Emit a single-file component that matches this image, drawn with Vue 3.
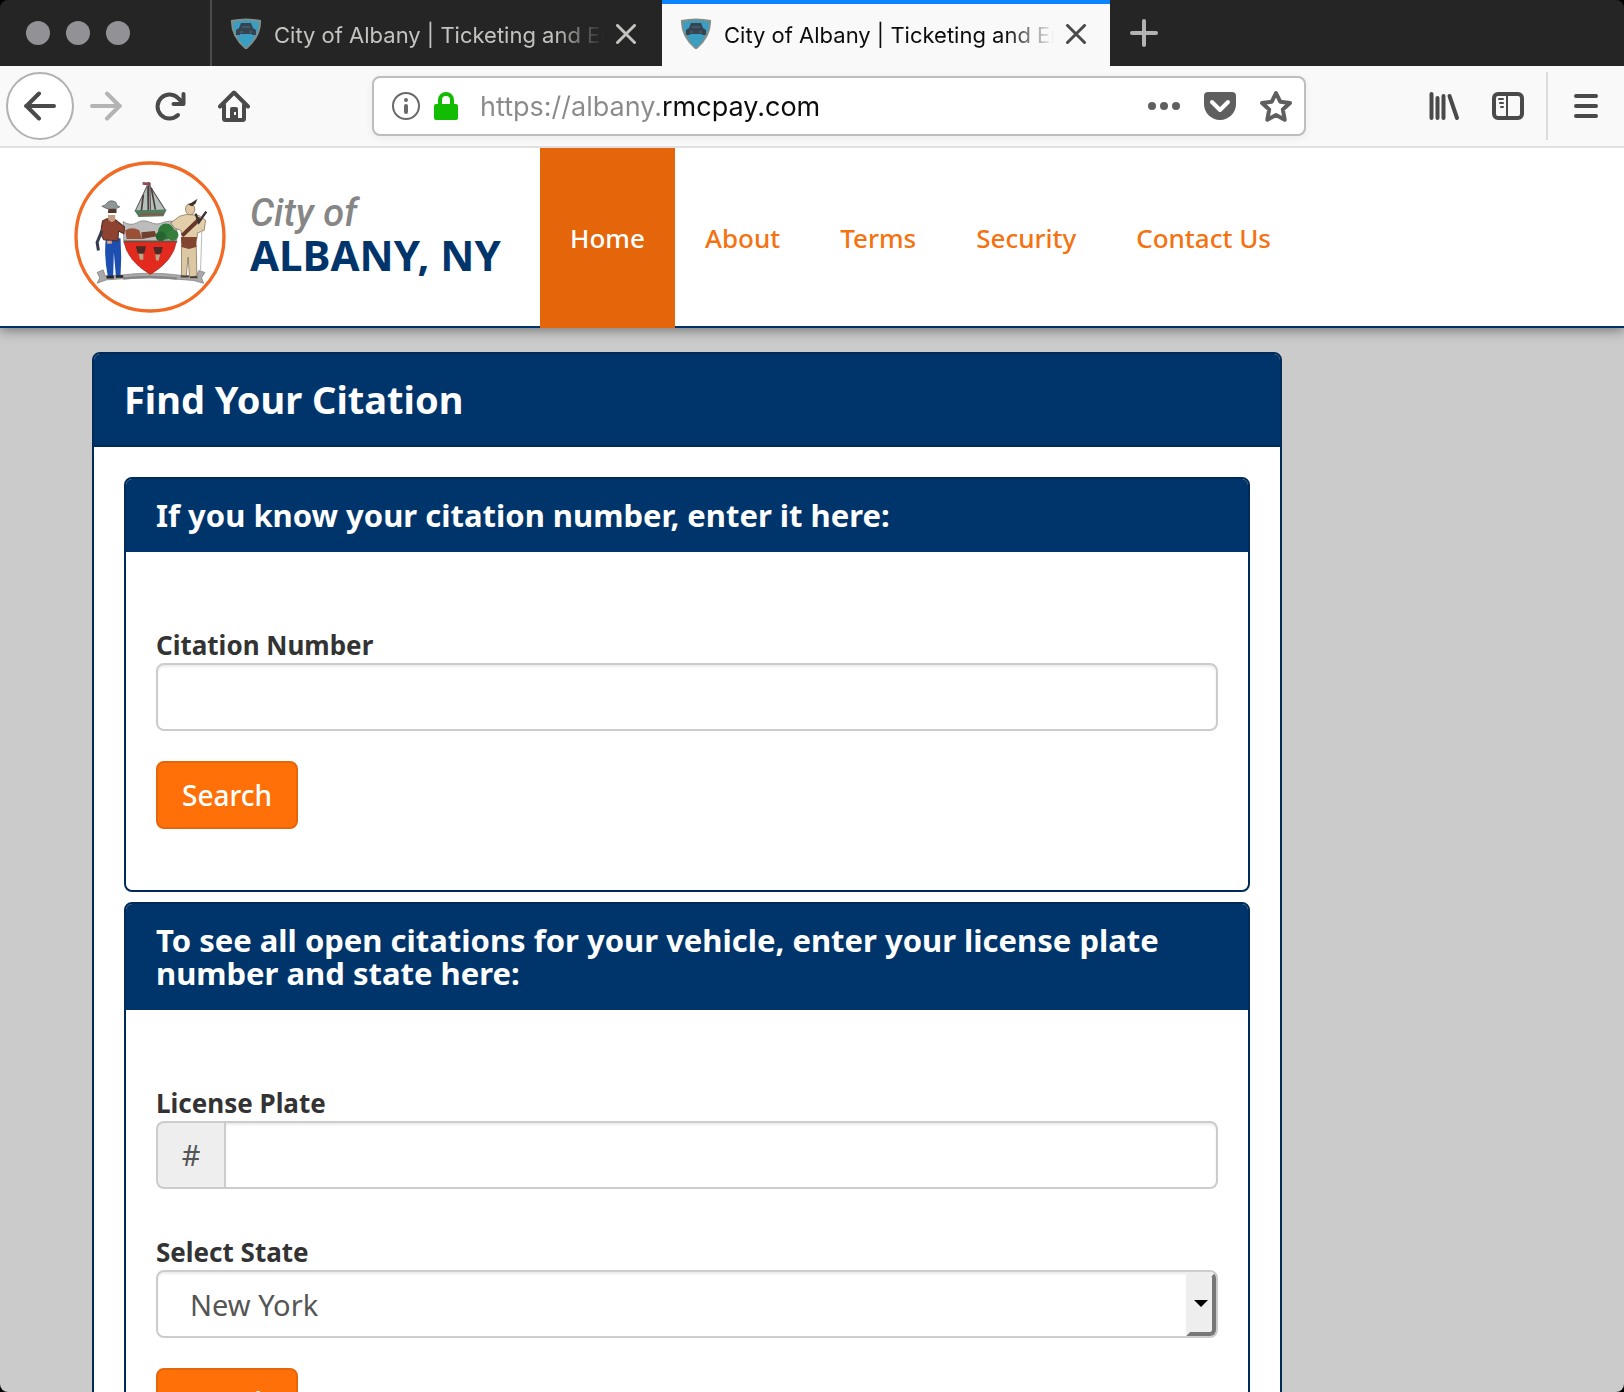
<template>
  <div class="window">
    <!-- Tab strip -->
    <div class="tab-strip">
      <div class="lights">
        <span class="light"></span>
        <span class="light"></span>
        <span class="light"></span>
      </div>
      <div
        v-for="tab in tabs"
        :key="tab.id"
        class="tab"
        :class="{ active: tab.id === activeTab }"
        @click="activeTab = tab.id"
      >
        <svg class="favicon" viewBox="0 0 32 32">
          <path d="M1 2 Q16 -1 31 2 Q32 18 17 31 L15 31 Q0 18 1 2z" fill="#7f8f8a" />
          <path d="M3 4 Q16 1 29 4 Q29 17 16 30 Q3 17 3 4z" fill="#3a9dc2" />
          <path d="M11 5h10l2 5 3 2v5h-4v-1H10v1H6v-5l3-2z" fill="#37444f" />
          <path d="M12 9h8M10 14h3M19 14h3" stroke="#4a6f85" stroke-width="1" />
        </svg>
        <span class="tab-title">{{ tab.title }}</span>
        <button class="tab-close" aria-label="Close tab">
          <svg width="20" height="20" viewBox="0 0 20 20">
            <path d="M1.5 1.5l17 17M18.5 1.5l-17 17" />
          </svg>
        </button>
      </div>
      <button class="new-tab" aria-label="New tab">
        <svg width="28" height="28" viewBox="0 0 28 28">
          <path d="M14 2v24M2 14h24" />
        </svg>
      </button>
    </div>

    <!-- Toolbar -->
    <div class="toolbar">
      <div class="nav-buttons">
        <button class="tool back" aria-label="Back">
          <svg width="32" height="32" viewBox="0 0 32 32">
            <path d="M2 16h28M15 3.5L2.5 16 15 28.5" />
          </svg>
        </button>
        <button class="tool forward" aria-label="Forward" disabled>
          <svg width="32" height="32" viewBox="0 0 32 32">
            <path d="M2 16h28M17 3.5L29.5 16 17 28.5" />
          </svg>
        </button>
        <button class="tool" aria-label="Reload">
          <svg width="32" height="32" viewBox="0 0 32 32">
            <path d="M24 25A12 12 0 1 1 24.5 8.5L28 12" />
            <path d="M29.5 4v10h-10" />
          </svg>
        </button>
        <button class="tool" aria-label="Home page">
          <svg width="32" height="32" viewBox="0 0 32 32">
            <path d="M2 16.5L16 2.5l14 14" />
            <path d="M6 15v13.5q0 1.500 1.500 1.500h17q1.500 0 1.500-1.500V15" />
            <path class="door" d="M12 30V19q0-2 2-2h4q2 0 2 2v11z" />
            <rect class="knob" x="16" y="22" width="2" height="3" />
          </svg>
        </button>
      </div>

      <div class="url-bar">
        <svg class="info" width="28" height="28" viewBox="0 0 28 28">
          <circle cx="14" cy="14" r="13" />
          <path d="M14 14v6" />
          <circle class="dot" cx="14" cy="8" r="2" />
        </svg>
        <svg class="lock" width="24" height="28" viewBox="0 0 24 28">
          <path d="M6 14V8a6 6 0 0 1 12 0v6" fill="none" stroke="#12bc00" stroke-width="4" />
          <rect y="12" width="24" height="16" rx="2" fill="#12bc00" />
        </svg>
        <input v-model="url" class="url" type="text" aria-label="Address" />
        <button class="page-action" aria-label="Page actions">
          <svg width="32" height="32" viewBox="0 0 32 32">
            <circle cx="4" cy="16" r="4" />
            <circle cx="16" cy="16" r="4" />
            <circle cx="28" cy="16" r="4" />
          </svg>
        </button>
        <button class="page-action" aria-label="Save to Pocket">
          <svg width="32" height="32" viewBox="0 0 32 32">
            <path d="M4 2h24q4 0 4 4v8a16 16 0 0 1-32 0V6q0-4 4-4z" />
            <path d="M8 12l8 8 8-8" fill="none" stroke="#fff" stroke-width="4" stroke-linecap="round" stroke-linejoin="round" />
          </svg>
        </button>
        <button class="page-action" aria-label="Bookmark this page">
          <svg width="32" height="32" viewBox="0 0 32 32">
            <path
              d="M16 3l4.200 8.700 9.800 1.300-7.200 6.500 1.900 10.200L16 25l-8.700 4.700 1.900-10.200L2 13l9.800-1.300z"
              fill="none" stroke="#5f5f60" stroke-width="4" stroke-linejoin="round"
            />
          </svg>
        </button>
      </div>

      <div class="end-buttons">
        <button class="tool" aria-label="Library">
          <svg width="32" height="32" viewBox="0 0 32 32">
            <path d="M3.500 4v24M9.500 8v20M15.500 6v22M21.500 6l7.500 22" />
          </svg>
        </button>
        <button class="tool" aria-label="Sidebar">
          <svg width="32" height="32" viewBox="0 0 32 32">
            <rect x="2" y="4" width="28" height="24" rx="4" />
            <path class="thin" d="M15 4v24M7 9h4M8 13h3M9 17h2" />
          </svg>
        </button>
        <button class="tool menu" aria-label="Menu">
          <svg width="24" height="24" viewBox="0 0 24 24">
            <path d="M2 2h20M2 12h20M2 22h20" />
          </svg>
        </button>
      </div>
    </div>

    <!-- Web page -->
    <div class="page">
      <header class="site-header">
        <a class="brand" href="#">
          <svg class="seal" width="152" height="152" viewBox="43 49 454 454">
            <circle cx="270" cy="276" r="221" fill="#fff" stroke="#f26a24" stroke-width="10" />
            <!-- ribbon -->
            <path d="M112 382l18-8 6 18 46-2q88-12 176 0l50 4 8-18 18 6-10 16 6 16-30-8q-130-14-260-2l-28 10 8-16z" fill="#a9a9a9" stroke="#777" stroke-width="2" />
            <path d="M190 400q80-10 160 0" fill="none" stroke="#858585" stroke-width="7" />
            <!-- ship -->
            <path d="M262 122l-36 76h38zM270 124l46 72-44 6z" fill="#b4c0b9" stroke="#555" stroke-width="3" />
            <path d="M266 112v90M274 130l12 64M250 150l-6 50" stroke="#4b3a3a" stroke-width="5" fill="none" />
            <path d="M248 112l24 2v9l-24-3z" fill="#8d4a52" />
            <path d="M224 197l96-3-10 20-74 2z" fill="#4f7d60" />
            <path d="M240 208h68" stroke="#a24940" stroke-width="5" />
            <!-- shield -->
            <path d="M190 230q20 14 40 4 18-12 40-2 22 10 40 0 20-6 40-2v62H192z" fill="#bcbcbc" stroke="#777" stroke-width="2" />
            <path d="M192 290h157q-10 58-78 98-68-40-79-98z" fill="#e32a1e" stroke="#9c2b24" stroke-width="2" />
            <path d="M196 256q20-12 42 0l8 26h-46z" fill="#9a4f37" />
            <path d="M244 262l40-4 6 16-44 8z" fill="#70402c" />
            <circle cx="318" cy="260" r="24" fill="#2e7937" />
            <circle cx="338" cy="270" r="17" fill="#377d3c" />
            <circle cx="302" cy="274" r="15" fill="#26652f" />
            <path d="M192 289h157" stroke="#6d5140" stroke-width="5" />
            <path d="M228 304h30l-4 18-10 8-12-8zM280 306h28l-4 18-12 6-8-8z" fill="#4a2926" />
            <path d="M236 326h14v18h-10zM286 328h14l-4 18h-8z" fill="#b8a688" />
            <!-- settler -->
            <path d="M138 280h44l2 58-2 54h-14l-6-70-2 72h-16q-12-60-6-114z" fill="#1c4fb0" />
            <path d="M128 228q26-18 48 4l18 14-2 20-16-8-2 30-42-4-10-18z" fill="#8d4330" stroke="#4c2b22" stroke-width="3" />
            <path d="M144 210h22v16l-10 6-10-6z" fill="#c49a80" />
            <path d="M126 184q10-2 14-8 10-14 28-4l4 10 8 4q-26 16-54-2z" fill="#8e9698" stroke="#555" stroke-width="2" />
            <path d="M146 192h24v12h-26z" fill="#54352c" />
            <path d="M126 258l-14 34 4 24" fill="none" stroke="#333c50" stroke-width="9" />
            <path d="M142 292h14" stroke="#d7a58c" stroke-width="9" />
            <path d="M140 396h22M168 394h22" stroke="#252525" stroke-width="8" />
            <!-- native figure -->
            <path d="M364 302l44-2 2 92-22 4-4-60-6 58-14-4z" fill="#dcc9a3" stroke="#75634d" stroke-width="2" />
            <path d="M332 234l26-20 24-6 34 4 20 14-4 30-20 8-2 18h-42l-6-26-18-6z" fill="#e2cfa9" stroke="#75634d" stroke-width="2" />
            <ellipse cx="390" cy="193" rx="14" ry="17" fill="#dfc6a0" stroke="#75634d" stroke-width="2" />
            <path d="M384 180l12-8 16-10-6 14-10 8z" fill="#3d332d" />
            <path d="M366 272l54-52" stroke="#65382a" stroke-width="12" />
            <path d="M406 206l10 26 22-32" fill="none" stroke="#383030" stroke-width="7" />
            <path d="M362 276h48l-2 30-22 6-22-6z" fill="#82452f" />
            <path d="M425 250l-4 126" stroke="#b8bcb5" stroke-width="3" />
            <path d="M362 394h24M390 396h22" stroke="#4b4035" stroke-width="6" />
          </svg>
          <span class="wordmark">
            <span class="city">City of</span>
            <span class="name">ALBANY, NY</span>
          </span>
        </a>
        <nav class="site-nav">
          <a
            v-for="item in navItems"
            :key="item"
            href="#"
            :class="{ current: item === 'Home' }"
          >{{ item }}</a>
        </nav>
      </header>

      <main class="panel">
        <h1 class="panel-heading">Find Your Citation</h1>
        <div class="panel-body">
          <form class="card" @submit.prevent>
            <h2 class="card-heading">If you know your citation number, enter it here:</h2>
            <div class="card-body">
              <label for="citation">Citation Number</label>
              <input id="citation" v-model="citation" class="control" type="text" />
              <button class="btn" type="submit">Search</button>
            </div>
          </form>

          <form class="card" @submit.prevent>
            <h2 class="card-heading">To see all open citations for your vehicle, enter your license plate number and state here:</h2>
            <div class="card-body">
              <label for="plate">License Plate</label>
              <div class="input-group">
                <span class="addon">#</span>
                <input id="plate" v-model="plate" class="control" type="text" />
              </div>
              <label class="state-label" for="state">Select State</label>
              <div class="select-wrap">
                <select id="state" v-model="state" class="control">
                  <option>New York</option>
                  <option>New Jersey</option>
                  <option>Vermont</option>
                </select>
                <span class="arrow"></span>
              </div>
              <button class="btn" type="submit">Search</button>
            </div>
          </form>
        </div>
      </main>
    </div>
  </div>
</template>

<script setup>
import { ref } from 'vue'

const tabs = [
  { id: 1, title: 'City of Albany | Ticketing and Enforcement' },
  { id: 2, title: 'City of Albany | Ticketing and Enforcement' }
]
const activeTab = ref(2)
const url = ref('https://albany.rmcpay.com')

const navItems = ['Home', 'About', 'Terms', 'Security', 'Contact Us']

const citation = ref('')
const plate = ref('')
const state = ref('New York')
</script>

<style>
body {
  background: #000;
}
</style>

<style scoped>
* {
  box-sizing: border-box;
}

.window {
  display: flex;
  flex-direction: column;
  height: 100vh;
  overflow: hidden;
  border-radius: 8px;
  font-family: "Noto Sans", "Open Sans", sans-serif;
}

button {
  padding: 0;
  border: none;
  background: none;
  font-family: inherit;
  color: inherit;
}

svg {
  display: block;
  flex: none;
}

/* tabs */
.tab-strip {
  display: flex;
  flex: none;
  height: 66px;
  background: #252525;
  font-family: Inter, Roboto, sans-serif;
}

.lights {
  display: flex;
  align-items: center;
  gap: 16px;
  width: 210px;
  padding-left: 26px;
}

.light {
  width: 24px;
  height: 24px;
  border-radius: 50%;
  background: #929195;
}

.tab {
  box-sizing: content-box;
  display: flex;
  align-items: center;
  width: 448px;
  border-left: 2px solid #4c4c4c;
  border-right: 2px solid #252525;
  color: #c3c3c0;
}

.tab.active {
  border: none;
  background: #f9f9fa;
  box-shadow: inset 0 4px #0a84ff;
  color: #0c0c0d;
}

.favicon {
  width: 32px;
  height: 32px;
  margin: 2px 12px 0 18px;
}

.tab-title {
  flex: 1;
  overflow: hidden;
  white-space: nowrap;
  font-size: 22px;
  line-height: 30px;
  padding-top: 4px;
  -webkit-mask-image: linear-gradient(to left, transparent, #000 48px);
  mask-image: linear-gradient(to left, transparent, #000 48px);
}

.tab-close {
  margin: 2px 24px 0 12px;
}

.tab-close path {
  fill: none;
  stroke: currentColor;
  stroke-width: 3;
  stroke-linecap: round;
}

.tab.active .tab-close {
  color: #4a4a4b;
}

.new-tab {
  margin-left: 20px;
}

.new-tab path {
  stroke: #b3b3b3;
  stroke-width: 4;
  stroke-linecap: round;
}

/* toolbar */
.toolbar {
  display: flex;
  flex: none;
  align-items: center;
  height: 82px;
  padding-left: 6px;
  border-bottom: 2px solid #e0e0e1;
  background: #f9f9fa;
}

.nav-buttons {
  display: flex;
  align-items: center;
  width: 366px;
}

.tool {
  width: 32px;
  margin-right: 32px;
}

.tool path,
.tool rect {
  fill: none;
  stroke: #4a4a4b;
  stroke-width: 4;
  stroke-linecap: round;
  stroke-linejoin: round;
}

.tool .door {
  fill: #4a4a4b;
  stroke: none;
}

.tool .knob {
  fill: #f9f9fa;
  stroke: none;
}

.tool .thin {
  stroke-width: 2;
}

.tool.back {
  display: flex;
  align-items: center;
  justify-content: center;
  width: 68px;
  height: 68px;
  margin-right: 16px;
  border: 2px solid #b1b1b2;
  border-radius: 50%;
  background: #fff;
}

.tool.forward path {
  stroke: #b4b4b5;
}

.url-bar {
  display: flex;
  flex: 1;
  align-items: center;
  height: 60px;
  padding: 0 12px 0 18px;
  border: 2px solid #bdbdbd;
  border-radius: 8px;
  background: #fff;
  box-shadow: 0 2px 8px rgba(0, 0, 0, 0.06);
}

.info {
  margin-right: 14px;
}

.info circle,
.info path {
  fill: none;
  stroke: #6a6a6b;
  stroke-width: 2;
}

.info path {
  stroke-width: 4;
  stroke-linecap: round;
}

.info .dot {
  fill: #6a6a6b;
  stroke: none;
}

/* the host part is darker than the scheme and subdomain */
.url {
  flex: 1;
  min-width: 0;
  margin-left: 22px;
  padding: 2px 0 0;
  border: none;
  outline: none;
  font-family: Inter, Roboto, sans-serif;
  font-size: 27px;
  line-height: 36px;
  color: transparent;
  background: linear-gradient(to right, #8a8a8b 183px, #0c0c0d 183px);
  -webkit-background-clip: text;
  background-clip: text;
}

.page-action {
  margin-left: 24px;
}

.page-action svg {
  fill: #5f5f60;
}

.end-buttons {
  display: flex;
  align-items: center;
  padding-left: 122px;
}

.end-buttons .tool {
  margin-right: 22px;
}

.end-buttons .tool:first-child {
  margin-right: 32px;
}

.end-buttons .menu {
  display: flex;
  align-items: center;
  width: 52px;
  height: 68px;
  margin-right: 26px;
  padding-left: 26px;
  border-left: 2px solid #dcdcdd;
}

/* page */
.page {
  flex: 1;
  min-height: 0;
  overflow: hidden;
  background: #cbcbcb;
}

.site-header {
  display: flex;
  height: 180px;
  border-bottom: 2px solid #00356b;
  background: #fff;
  box-shadow: 0 2px 12px rgba(0, 0, 0, 0.45);
}

.brand {
  display: flex;
  align-items: center;
  width: 540px;
  padding-left: 74px;
  gap: 24px;
  text-decoration: none;
}

.wordmark {
  display: flex;
  flex-direction: column;
  padding-bottom: 5px;
}

.city {
  font: italic 500 38px/40px Roboto, sans-serif;
  color: #868686;
}

.name {
  font-size: 42px;
  line-height: 44px;
  font-weight: 700;
  color: #00356b;
  white-space: nowrap;
}

.site-nav {
  display: flex;
  height: 180px;
}

.site-nav a {
  padding: 0 30px;
  font-size: 26px;
  line-height: 180px;
  font-weight: 500;
  color: #f57211;
  text-decoration: none;
  white-space: nowrap;
}

.site-nav a.current {
  background: #e5650a;
  color: #fff;
}

.panel {
  max-width: 1190px;
  margin: 24px 92px;
  border: 2px solid #002a57;
  border-radius: 8px;
  background: #fff;
}

.panel-heading {
  margin: 0;
  padding: 20px 30px 21px;
  border-bottom: 2px solid #002a57;
  border-radius: 6px 6px 0 0;
  background: #00356b;
  color: #fff;
  font-size: 38px;
  line-height: 50px;
}

.panel-body {
  padding: 30px;
}

.card {
  margin-bottom: 10px;
  border: 2px solid #002a57;
  border-radius: 8px;
}

.card-heading {
  margin: 0;
  padding: 20px 30px;
  border-radius: 6px 6px 0 0;
  background: #00356b;
  color: #fff;
  font-size: 31px;
  line-height: 33px;
}

.card-body {
  padding: 75px 30px 61px;
}

label {
  display: block;
  color: #333;
  font-size: 26px;
  line-height: 36px;
  font-weight: 700;
}

.control {
  display: block;
  width: 100%;
  height: 68px;
  padding: 0 24px;
  border: 2px solid #ccc;
  border-radius: 8px;
  outline: none;
  background: #fff;
  box-shadow: inset 0 2px 2px rgba(0, 0, 0, 0.075);
  color: #555;
  font-family: inherit;
  font-size: 29px;
}

.btn {
  height: 68px;
  margin-top: 30px;
  padding: 0 24px;
  border: 2px solid #e5650a;
  border-radius: 8px;
  background: #ff7108;
  color: #fff;
  font-size: 28px;
  font-weight: 500;
}

.input-group {
  display: flex;
}

.addon {
  flex: none;
  width: 68px;
  border: 2px solid #ccc;
  border-right: none;
  border-radius: 8px 0 0 8px;
  background: #eee;
  color: #555;
  font-size: 29px;
  line-height: 64px;
  text-align: center;
}

.input-group .control {
  flex: 1;
  width: auto;
  border-radius: 0 8px 8px 0;
}

.state-label {
  margin-top: 45px;
}

.select-wrap {
  position: relative;
}

select.control {
  appearance: none;
  padding-left: 32px;
}

.arrow {
  position: absolute;
  top: 2px;
  right: 2px;
  bottom: 2px;
  width: 30px;
  border: 4px solid;
  border-color: #eee #777 #777 #eee;
  border-radius: 0 6px 6px 0;
  background: #eee;
  pointer-events: none;
}

.arrow::after {
  content: '';
  position: absolute;
  top: 24px;
  left: 4px;
  border: 7px solid transparent;
  border-top-color: #000;
  border-bottom: none;
}
</style>
